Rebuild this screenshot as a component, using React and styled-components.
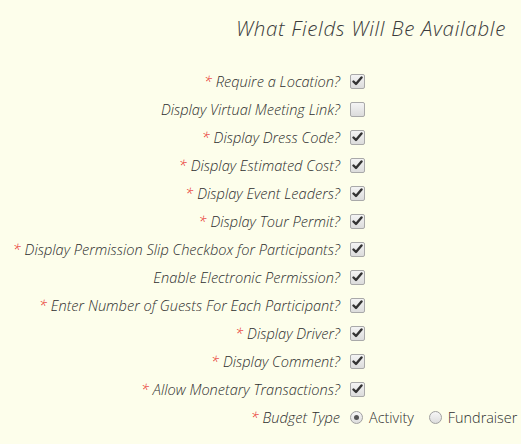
import React, { useState } from 'react'
import styled, { createGlobalStyle } from 'styled-components'

const GlobalStyle = createGlobalStyle`
  html, body {
    margin: 0;
    padding: 0;
    background: #fdfeeb;
  }
  body {
    font-family: 'Open Sans', 'Liberation Sans', sans-serif;
  }
`

const Page = styled.div`
  width: 521px;
  height: 444px;
  background: #fdfeeb;
  color: #444;
  overflow: hidden;
`

const Title = styled.h2`
  margin: 0;
  padding: 14px 15px 0 0;
  text-align: right;
  font-size: 20.5px;
  font-weight: 300;
  font-style: italic;
  color: #3a3a3a;
  letter-spacing: 0.7px;
  height: 52px;
  box-sizing: border-box;
`

const Fields = styled.div`
  display: grid;
  grid-template-columns: 340px auto;
  grid-auto-rows: 28px;
  column-gap: 10px;
  margin-top: 15px;
`

const Label = styled.label`
  justify-self: end;
  align-self: center;
  font-size: 14.6px;
  font-weight: 300;
  font-style: italic;
  color: #2e2e2e;
  white-space: nowrap;
`

const Star = styled.span`
  color: #e8322e;
  margin-right: 4px;
`

const Control = styled.div`
  display: flex;
  align-items: center;
  gap: 6px;
`

const Box = styled.span`
  width: 13px;
  height: 13px;
  border: 1px solid #a9a9a9;
  border-radius: 2px;
  background: linear-gradient(#f4f4f4, #dcdcdc);
  display: flex;
  align-items: center;
  justify-content: center;
  cursor: pointer;
`

const Radio = styled.span`
  width: 11px;
  height: 11px;
  border: 1px solid #a0a0a0;
  border-radius: 50%;
  background: linear-gradient(#f6f6f6, #dedede);
  display: flex;
  align-items: center;
  justify-content: center;
  cursor: pointer;

  &::after {
    content: '';
    width: 5px;
    height: 5px;
    border-radius: 50%;
    background: ${p => (p.$on ? '#555' : 'transparent')};
  }
`

const RadioText = styled.span`
  font-size: 14.4px;
  font-weight: 300;
  color: #2e2e2e;
  margin-right: 9px;
`

const fields = [
  { label: 'Require a Location?', req: true, on: true },
  { label: 'Display Virtual Meeting Link?', req: false, on: false },
  { label: 'Display Dress Code?', req: true, on: true },
  { label: 'Display Estimated Cost?', req: true, on: true },
  { label: 'Display Event Leaders?', req: true, on: true },
  { label: 'Display Tour Permit?', req: true, on: true },
  { label: 'Display Permission Slip Checkbox for Participants?', req: true, on: true },
  { label: 'Enable Electronic Permission?', req: false, on: true },
  { label: 'Enter Number of Guests For Each Participant?', req: true, on: true },
  { label: 'Display Driver?', req: true, on: true },
  { label: 'Display Comment?', req: true, on: true },
  { label: 'Allow Monetary Transactions?', req: true, on: true },
]

const Check = () => (
  <svg width="11" height="10" viewBox="0 0 11 10">
    <path d="M1.5 5.5 L4 8 L9.5 1.5" fill="none" stroke="#333" strokeWidth="2.4" strokeLinecap="round" strokeLinejoin="round" />
  </svg>
)

const App = () => {
  const [checks, setChecks] = useState(fields.map(f => f.on))
  const [budget, setBudget] = useState('Activity')

  const toggle = i => {
    setChecks(checks.map((c, j) => (j === i ? !c : c)))
  }

  return (
    <Page>
      <GlobalStyle />
      <Title>What Fields Will Be Available</Title>
      <Fields>
        {fields.map((f, i) => (
          <React.Fragment key={i}>
            <Label>
              {f.req && <Star>*</Star>}
              {f.label}
            </Label>
            <Control>
              <Box onClick={() => toggle(i)}>{checks[i] && <Check />}</Box>
            </Control>
          </React.Fragment>
        ))}
        <Label>
          <Star>*</Star>Budget Type
        </Label>
        <Control>
          <Radio $on={budget === 'Activity'} onClick={() => setBudget('Activity')} />
          <RadioText>Activity</RadioText>
          <Radio $on={budget === 'Fundraiser'} onClick={() => setBudget('Fundraiser')} />
          <RadioText>Fundraiser</RadioText>
        </Control>
      </Fields>
    </Page>
  )
}

export default App
